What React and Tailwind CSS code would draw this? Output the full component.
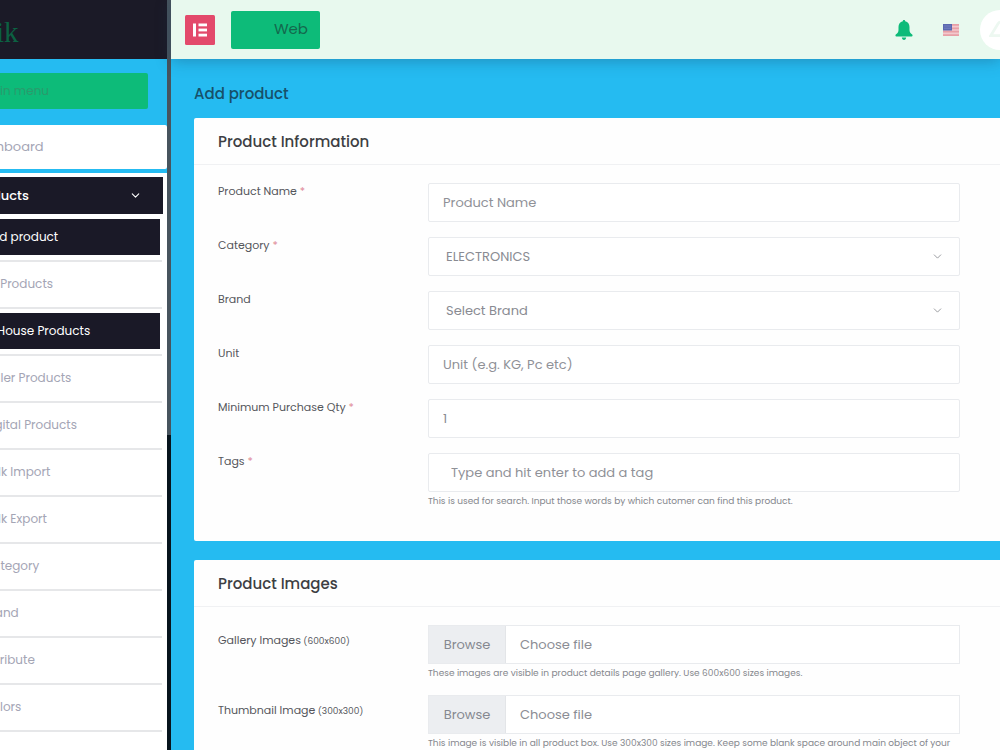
import React from "react";
import { ChevronDown } from "lucide-react";

const menu = [
  { text: "Add product", active: true },
  { text: "All Products" },
  { text: "In House Products", active: true },
  { text: "Seller Products" },
  { text: "Digital Products" },
  { text: "Bulk Import" },
  { text: "Bulk Export" },
  { text: "Category" },
  { text: "Brand" },
  { text: "Attribute" },
  { text: "Colors" },
];

const controlBox =
  "h-[39px] w-full rounded-xs border border-[#e9ebee] bg-white text-[13px] text-[#898b92] outline-none placeholder:text-[#8f9197] placeholder:opacity-100";

function Sidebar() {
  return (
    <aside className="flex w-[171px] shrink-0 overflow-hidden bg-[#25bbf1]">
      <div className="flex min-w-0 flex-1 flex-col">
        <div className="flex h-[59px] shrink-0 items-center bg-[#1b1a27] pt-1">
          <span className="-ml-1 font-['Liberation_Serif',serif] text-[29px] leading-8 text-[#0c6142]">ik</span>
        </div>
        <div className="pt-3.5 pr-[19px] pb-4">
          <input
            type="search"
            aria-label="Search in menu"
            placeholder="in menu"
            className="h-9 w-full rounded-r-xs bg-[#0dbb79] text-[12px] outline-none placeholder:text-[#2a9a6c] placeholder:opacity-100"
          />
        </div>
        <a href="#dashboard" className="flex h-11 shrink-0 items-center rounded-r-xs bg-white text-[13px] text-[#a4a5b5]">
          <span className="-ml-[29px]">Dashboard</span>
        </a>
        <nav className="mt-1 flex-1 bg-white pt-1">
          <button
            type="button"
            className="flex h-[37px] w-[163px] items-center justify-between bg-[#1a1927] pr-[21px] text-[13px] font-medium text-white"
          >
            <span className="-ml-[29px]">Products</span>
            <ChevronDown size={13} strokeWidth={2} />
          </button>
          <ul className="mt-px">
            {menu.map((item) => (
              <li key={item.text} className="h-[47px] w-[162px] border-b-2 border-[#e6e7e9] pt-1">
                <a
                  href="#menu"
                  className={
                    item.active
                      ? "flex h-9 w-40 items-center bg-[#1a1927] text-[12px] text-white"
                      : "flex h-9 w-40 items-center text-[12px] text-[#a4a5b5]"
                  }
                >
                  <span className="-ml-[17px]">{item.text}</span>
                </a>
              </li>
            ))}
          </ul>
        </nav>
      </div>
      <div className="flex w-1 flex-col bg-[#07141d]">
        <div className="h-[58%] bg-[#47545e]" />
      </div>
    </aside>
  );
}

function Header() {
  return (
    <header className="relative flex h-[59px] shrink-0 items-center justify-between bg-[#e8f9ee] pl-3.5 shadow-[0_2px_14px_rgba(30,60,90,0.35)]">
      <div className="flex items-center gap-4">
        <button type="button" aria-label="Elementor">
          <svg width="30" height="30" viewBox="0 0 30 30">
            <rect width="30" height="30" rx="1.5" fill="#e34a6b" />
            <rect x="8" y="8.500" width="3" height="13" fill="#fff" />
            <rect x="13.500" y="8.500" width="8.500" height="2.800" fill="#fff" />
            <rect x="13.500" y="13.600" width="8.500" height="2.800" fill="#fff" />
            <rect x="13.500" y="18.700" width="8.500" height="2.800" fill="#fff" />
          </svg>
        </button>
        <button
          type="button"
          className="h-[38px] w-[89px] rounded-xs bg-[#0dbb79] pr-3 text-right text-[15px] text-[#14684d]"
        >
          Web
        </button>
      </div>
      <div className="-mr-5 flex items-center">
        <button type="button" aria-label="Notifications">
          <svg width="18" height="20" viewBox="0 0 18 20" fill="#0dbb79">
            <path d="M9 0C8.300 0 7.800.5 7.800 1.300 5 1.900 3.500 4.200 3.500 7V10C3.500 12 2.700 13 .8 14.600.2 15.100.3 16.500 1.400 16.500H16.600C17.700 16.500 17.800 15.100 17.200 14.600 15.300 13 14.500 12 14.500 10V7C14.500 4.200 13 1.900 10.200 1.300 10.200.5 9.700 0 9 0Z" />
            <path d="M6.800 17.500H11.200C11 19 10.200 20 9 20S7 19 6.800 17.500Z" />
          </svg>
        </button>
        <button type="button" aria-label="Language" className="ml-[30px]">
          <svg width="16" height="12" viewBox="0 0 16 12">
            <rect width="16" height="12" fill="#f3c9cd" />
            <path d="M0 .9H16M0 4.300H16M0 7.700H16M0 11.100H16" stroke="#e8a0a6" strokeWidth="1.700" />
            <rect width="9" height="6.500" fill="#5a68b0" />
            <path d="M1.500 2H8M1.500 4.200H8" stroke="#a9b2dc" strokeWidth=".7" strokeDasharray="1 1" />
          </svg>
        </button>
        <button
          type="button"
          aria-label="Account"
          className="ml-[21px] flex size-10 items-center justify-center rounded-full bg-white"
        >
          <svg width="22" height="22" viewBox="0 0 24 24" fill="none" stroke="#edf8f1" strokeWidth="3">
            <path d="M2 18 10 5Q12 2 14 5L22 18Z" />
          </svg>
        </button>
      </div>
    </header>
  );
}

function Card({ title, children }) {
  return (
    <section className="rounded-l-xs bg-[#fefefe]">
      <h2 className="flex h-[47px] items-center border-b border-[#f0f1f3] px-6 pt-0.5 text-[15px] font-medium text-[#3d3e43]">
        {title}
      </h2>
      <div className="flex flex-col gap-[15px] pt-[18px] pr-10 pb-[33px] pl-6">{children}</div>
    </section>
  );
}

function Field({ id, label, size, required, help, children }) {
  return (
    <div className="flex">
      <label
        htmlFor={id}
        className={
          size
            ? "w-[210px] shrink-0 pt-[7px] text-[11px] leading-4 text-[#55565c]"
            : "w-[210px] shrink-0 text-[11px] leading-4 text-[#55565c]"
        }
      >
        {label}
        {size && <span className="text-[9px]"> {size}</span>}
        {required && <span className="text-[#e08a98]"> *</span>}
      </label>
      <div className="min-w-0 flex-1">
        {children}
        {help && <p className="mt-0.5 text-[9px] leading-[14px] text-[#85878d]">{help}</p>}
      </div>
    </div>
  );
}

function Select({ id, value }) {
  return (
    <div className="relative">
      <select id={id} className={controlBox + " appearance-none px-[17px]"}>
        <option>{value}</option>
      </select>
      <ChevronDown size={13} strokeWidth={1.500} className="pointer-events-none absolute top-[13px] right-4 text-[#85878d]" />
    </div>
  );
}

function FilePicker({ id }) {
  return (
    <label className="flex h-[39px] cursor-pointer border border-[#e9ebee] bg-white text-[13px] text-[#8b8d94]">
      <input id={id} type="file" className="sr-only" />
      <span className="flex w-[77px] items-center justify-center border-r border-[#e3e5e8] bg-[#eceef1] text-[#858890]">Browse</span>
      <span className="flex items-center pl-3.5">Choose file</span>
    </label>
  );
}

export default function App() {
  return (
    <div className="flex h-screen overflow-hidden bg-[#25bbf1] font-['Poppins','Inter',sans-serif]">
      <Sidebar />
      <div className="flex min-w-0 flex-1 flex-col">
        <Header />
        <main className="flex min-h-0 flex-1 flex-col pl-[23px]">
          <h1 className="flex h-[59px] shrink-0 items-center pt-3 text-[15px] font-medium text-[#175069]">Add product</h1>
          <form className="flex flex-col gap-[19px]">
            <Card title="Product Information">
              <Field id="name" label="Product Name" required>
                <input id="name" placeholder="Product Name" className={controlBox + " px-3.5"} />
              </Field>
              <Field id="category" label="Category" required>
                <Select id="category" value="ELECTRONICS" />
              </Field>
              <Field id="brand" label="Brand">
                <Select id="brand" value="Select Brand" />
              </Field>
              <Field id="unit" label="Unit">
                <input id="unit" placeholder="Unit (e.g. KG, Pc etc)" className={controlBox + " px-3.5"} />
              </Field>
              <Field id="qty" label="Minimum Purchase Qty" required>
                <input id="qty" defaultValue="1" className={controlBox + " px-3.5"} />
              </Field>
              <Field
                id="tags"
                label="Tags"
                required
                help="This is used for search. Input those words by which cutomer can find this product."
              >
                <input id="tags" placeholder="Type and hit enter to add a tag" className={controlBox + " px-[22px]"} />
              </Field>
            </Card>
            <Card title="Product Images">
              <Field
                id="gallery"
                label="Gallery Images"
                size="(600x600)"
                help="These images are visible in product details page gallery. Use 600x600 sizes images."
              >
                <FilePicker id="gallery" />
              </Field>
              <Field
                id="thumbnail"
                label="Thumbnail Image"
                size="(300x300)"
                help="This image is visible in all product box. Use 300x300 sizes image. Keep some blank space around main object of your"
              >
                <FilePicker id="thumbnail" />
              </Field>
            </Card>
          </form>
        </main>
      </div>
    </div>
  );
}
